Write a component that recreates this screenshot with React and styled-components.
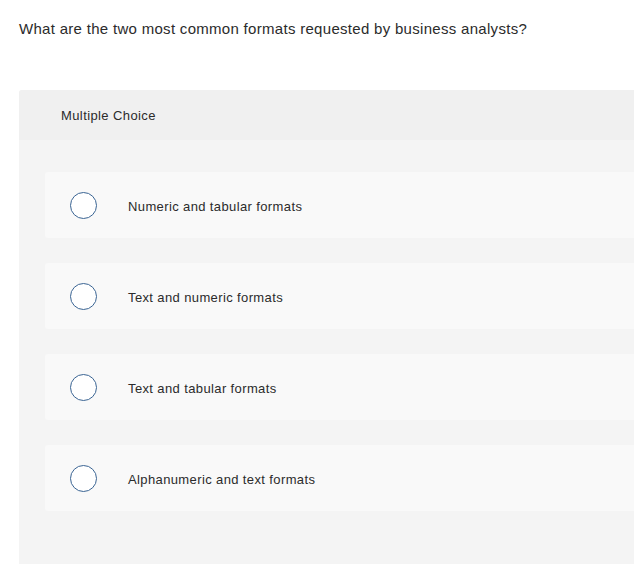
import React from 'react';
import styled, { createGlobalStyle } from 'styled-components';

const GlobalStyle = createGlobalStyle`
  body {
    margin: 0;
    background: #fff;
    font-family: "Liberation Sans", Arial, sans-serif;
    color: #2b2b2b;
    letter-spacing: 0.3px;
  }
`;

const Page = styled.div`
  padding: 19px 0 0 19px;
`;

const Question = styled.p`
  margin: 0;
  font-size: 15px;
  line-height: 19px;
  height: 71px;
`;

const Card = styled.div`
  background: #f4f4f4;
  border-radius: 3px 0 0 0;
  padding-bottom: 60px;
`;

const Header = styled.div`
  height: 50px;
  background: #f0f0f0;
  display: flex;
  align-items: center;
  padding-left: 42px;
  font-size: 13px;
  letter-spacing: 0.4px;
  border-radius: 3px 0 0 0;
`;

const Options = styled.div`
  display: flex;
  flex-direction: column;
  gap: 25px;
  padding: 32px 0 0 26px;
`;

const Option = styled.label`
  display: flex;
  align-items: center;
  height: 66px;
  background: #f9f9f9;
  border-radius: 3px 0 0 3px;
  padding-left: 25px;
  font-size: 13px;
  letter-spacing: 0.38px;
  cursor: pointer;
`;

const Radio = styled.span`
  width: 25px;
  height: 25px;
  border: 1.5px solid #3a6493;
  border-radius: 50%;
  background: #fff;
  margin-right: 31px;
  flex-shrink: 0;
`;

const Label = styled.span`
  padding-top: 2px;
`;

const answers = [
  'Numeric and tabular formats',
  'Text and numeric formats',
  'Text and tabular formats',
  'Alphanumeric and text formats',
];

export default function App() {
  return (
    <>
      <GlobalStyle />
      <Page>
        <Question>What are the two most common formats requested by business analysts?</Question>
        <Card>
          <Header>Multiple Choice</Header>
          <Options>
            {answers.map((a) => (
              <Option key={a}>
                <Radio />
                <Label>{a}</Label>
              </Option>
            ))}
          </Options>
        </Card>
      </Page>
    </>
  );
}
